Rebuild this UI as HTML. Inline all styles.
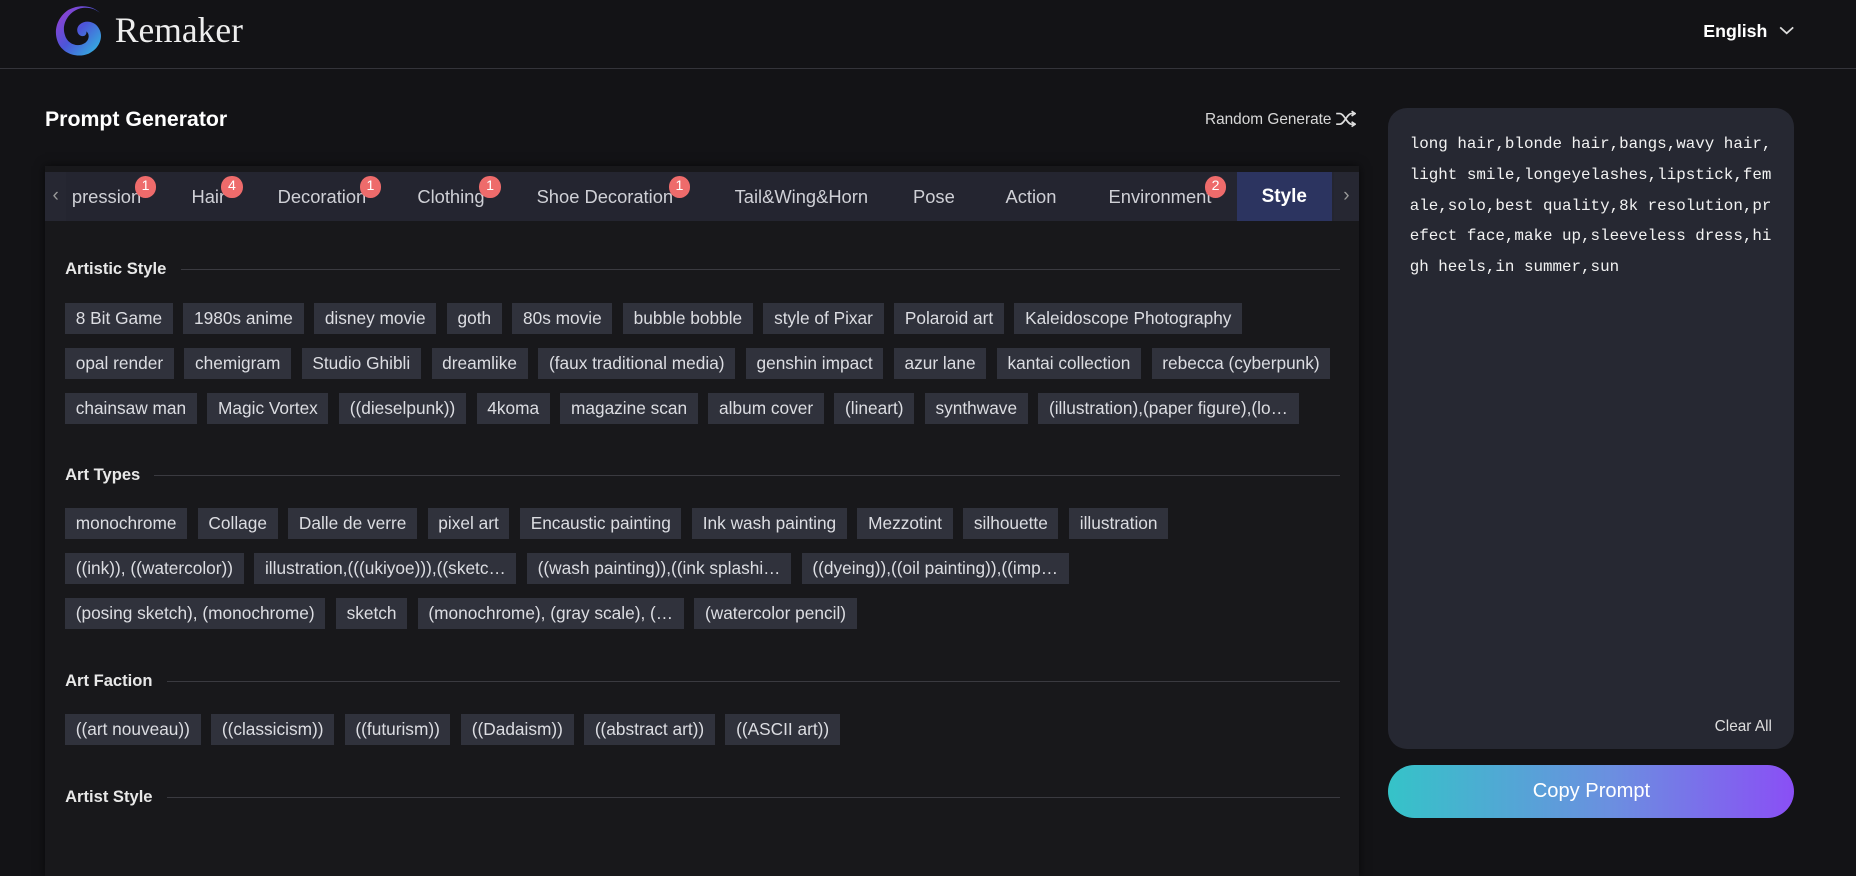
<!DOCTYPE html>
<html><head><meta charset="utf-8"><style>
html{zoom:1.18367}
*{box-sizing:border-box;margin:0;padding:0}
body{width:1568px;height:701px;overflow:hidden;background:#131316;font-family:"Liberation Sans",sans-serif;color:#e6e6e6;position:relative}
.hdr{position:absolute;left:0;top:0;width:1568px;height:58px;border-bottom:1px solid #34343a}
.abs{position:absolute}
.panel{position:absolute;left:38px;top:140px;width:1110px;height:600px;background:#18181b;box-shadow:0 0 8px rgba(0,0,0,.6)}
.tabs{position:absolute;left:0;top:5px;width:1110px;height:42px;background:#242530;overflow:hidden}
.tab{position:absolute;top:0;height:42px;line-height:42px;font-size:15.5px;color:#cfd0d6;transform:translateX(-50%);white-space:nowrap}
.badge{position:absolute;top:4px;width:18px;height:18px;border-radius:50%;background:#ee6b6b;color:#fff;font-size:12px;line-height:18px;text-align:center}
.sec{position:absolute;left:17px;width:1077px;font-size:14px;font-weight:bold;color:#e8e8e8;display:flex;align-items:center}
.sec:after{content:"";flex:1;height:1px;background:#3a3a40;margin-left:12px}
.tags{position:absolute;left:17px;width:1080px;display:flex;flex-wrap:wrap;gap:12px 9px}
.tags span{display:block;height:26px;line-height:26px;padding:0 9px;background:#30323c;font-size:14.6px;color:#dcdde2;white-space:nowrap}
.box{position:absolute;left:1173px;top:91px;width:343px;height:542px;background:#262832;border-radius:16px}
.mono{position:absolute;left:18px;top:18px;font-family:"Liberation Mono",monospace;font-size:13.4px;line-height:26px;color:#f2f2f2;white-space:pre}
.btn{position:absolute;left:1173px;top:646px;width:343px;height:45px;border-radius:23px;background:linear-gradient(90deg,#35c3c8,#6b8fe0 55%,#8a4ff5);color:#fff;font-size:17px;text-align:center;line-height:45px}
</style></head><body>
<div class="hdr">
<svg class="abs" style="left:45px;top:3px" width="44" height="45" viewBox="0 0 44 45"><defs><linearGradient id="g" x1="0" y1="0" x2="1" y2="1"><stop offset="0" stop-color="#a23ad0"/><stop offset=".5" stop-color="#4c55d8"/><stop offset="1" stop-color="#2fc0e0"/></linearGradient></defs><path d="M40 8C34 1 22 0 13 5 4 11 0 22 4 32c4 10 16 14 26 10 9-4 13-14 9-21-3-6-11-8-16-4-4 3-3 9 1 10 3 1 5-2 4-4 3 2 3 7-1 10-6 4-15 1-17-7-3-9 3-19 12-22 7-2 14 0 18 4z" fill="url(#g)"/></svg>
<div class="abs" style="left:97px;top:8px;font-family:'Liberation Serif',serif;font-size:30px;color:#eee">Remaker</div>
<div class="abs" style="left:1439px;top:18px;font-size:15px;font-weight:bold;color:#fff">English</div>
<svg class="abs" style="left:1503px;top:21px" width="13" height="9" viewBox="0 0 13 9"><path d="M1 2l5.5 5L12 2" stroke="#ddd" stroke-width="1.5" fill="none"/></svg>
</div>
<div class="abs" style="left:38px;top:90px;font-size:18px;font-weight:bold;color:#fff">Prompt Generator</div>
<div class="abs" style="left:1018px;top:94px;font-size:13px;color:#d8d8d8">Random Generate</div>
<svg class="abs" style="left:1128px;top:93px" width="18" height="15" viewBox="0 0 18 15"><path d="M1 3h3c4 0 6 9 10 9h3M1 12h3c4 0 6-9 10-9h3M14 1l3 2-3 2M14 10l3 2-3 2" stroke="#ddd" stroke-width="1.4" fill="none"/></svg>
<div class="panel">
<div class="tabs">
<div class="abs" style="left:0;top:0;width:18px;height:42px;background:#262732;color:#999;font-size:16px;line-height:40px;text-align:center">‹</div>
<div class="tab" style="left:52px">pression</div>
<div class="tab" style="left:138px">Hair</div>
<div class="tab" style="left:234px">Decoration</div>
<div class="tab" style="left:343px">Clothing</div>
<div class="tab" style="left:473px">Shoe Decoration</div>
<div class="tab" style="left:639px">Tail&amp;Wing&amp;Horn</div>
<div class="tab" style="left:751px">Pose</div>
<div class="tab" style="left:833px">Action</div>
<div class="tab" style="left:942px">Environment</div>
<div class="abs" style="left:1007px;top:0;width:80px;height:42px;background:#2c3460;color:#fff;font-weight:bold;font-size:16px;line-height:42px;text-align:center">Style</div>
<div class="abs" style="left:1089px;top:0;width:21px;height:42px;background:#262732;color:#999;font-size:16px;line-height:40px;text-align:center">›</div>
<div class="badge" style="left:76px">1</div>
<div class="badge" style="left:149px">4</div>
<div class="badge" style="left:266px">1</div>
<div class="badge" style="left:367px">1</div>
<div class="badge" style="left:527px">1</div>
<div class="badge" style="left:980px">2</div>
</div>
<div class="sec" style="top:79px">Artistic Style</div>
<div class="tags" style="top:116px"><span>8 Bit Game</span><span>1980s anime</span><span>disney movie</span><span>goth</span><span>80s movie</span><span>bubble bobble</span><span>style of Pixar</span><span>Polaroid art</span><span>Kaleidoscope Photography</span></div>
<div class="tags" style="top:154px"><span>opal render</span><span>chemigram</span><span>Studio Ghibli</span><span>dreamlike</span><span>(faux traditional media)</span><span>genshin impact</span><span>azur lane</span><span>kantai collection</span><span>rebecca (cyberpunk)</span></div>
<div class="tags" style="top:192px"><span>chainsaw man</span><span>Magic Vortex</span><span>((dieselpunk))</span><span>4koma</span><span>magazine scan</span><span>album cover</span><span>(lineart)</span><span>synthwave</span><span>(illustration),(paper figure),(lo…</span></div>
<div class="sec" style="top:253px">Art Types</div>
<div class="tags" style="top:289px"><span>monochrome</span><span>Collage</span><span>Dalle de verre</span><span>pixel art</span><span>Encaustic painting</span><span>Ink wash painting</span><span>Mezzotint</span><span>silhouette</span><span>illustration</span></div>
<div class="tags" style="top:327px"><span>((ink)), ((watercolor))</span><span>illustration,(((ukiyoe))),((sketc…</span><span>((wash painting)),((ink splashi…</span><span>((dyeing)),((oil painting)),((imp…</span></div>
<div class="tags" style="top:365px"><span>(posing sketch), (monochrome)</span><span>sketch</span><span>(monochrome), (gray scale), (…</span><span>(watercolor pencil)</span></div>
<div class="sec" style="top:427px">Art Faction</div>
<div class="tags" style="top:463px"><span>((art nouveau))</span><span>((classicism))</span><span>((futurism))</span><span>((Dadaism))</span><span>((abstract art))</span><span>((ASCII art))</span></div>
<div class="sec" style="top:525px">Artist Style</div>
</div>
<div class="box">
<div class="mono">long hair,blonde hair,bangs,wavy hair,
light smile,longeyelashes,lipstick,fem
ale,solo,best quality,8k resolution,pr
efect face,make up,sleeveless dress,hi
gh heels,in summer,sun</div>
<div class="abs" style="right:19px;top:516px;font-size:13px;color:#ddd">Clear All</div>
</div>
<div class="btn">Copy Prompt</div>
</body></html>
